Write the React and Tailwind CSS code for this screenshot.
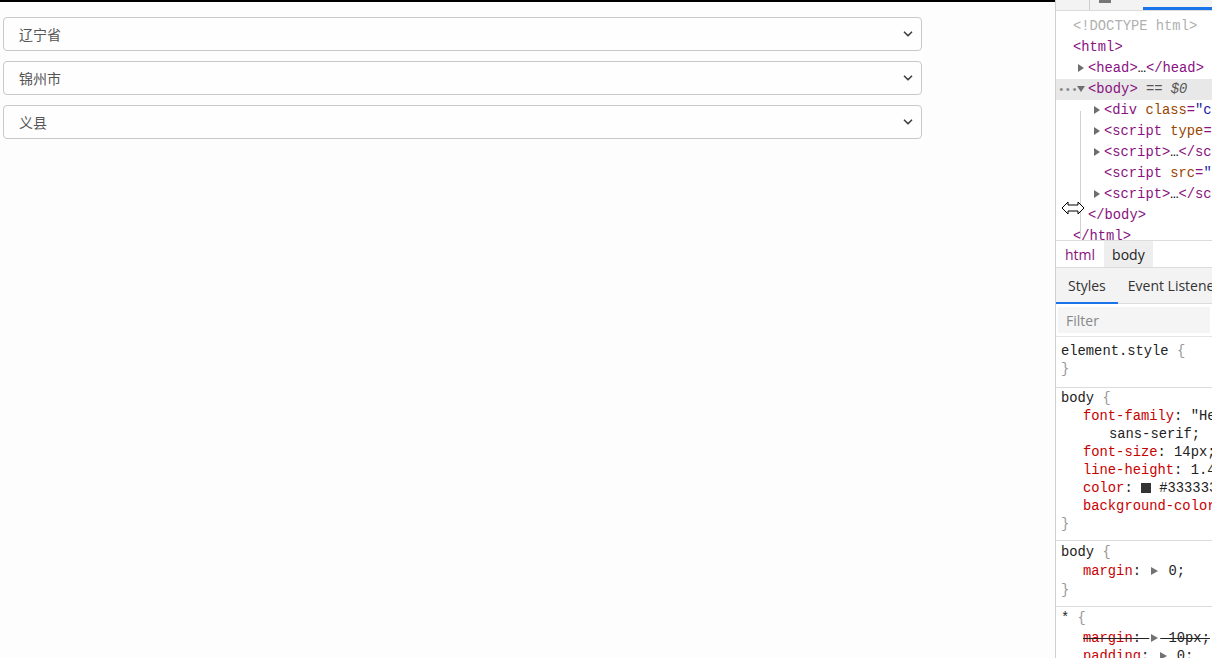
import { ChevronDown } from "lucide-react";

const selects = ["辽宁省", "锦州市", "义县"];

const mono = "font-['Consolas','Liberation_Mono',monospace] text-[13.8px]";

function Tag({ children }) {
  return <span className="text-[#881280]">{children}</span>;
}

function Tri({ open }) {
  return (
    <span className="inline-block w-[11px]">
      <svg width="8" height="8" viewBox="0 0 8 8" className="inline-block align-[0px]">
        {open ? (
          <path d="M0 1 L8 1 L4 7 Z" fill="#6e6e6e" />
        ) : (
          <path d="M1 0 L7 4 L1 8 Z" fill="#6e6e6e" />
        )}
      </svg>
    </span>
  );
}

function Arrow() {
  return (
    <svg width="7" height="8" viewBox="0 0 7 8" className="mx-[2px] inline-block align-[0px]">
      <path d="M0 0 L7 4 L0 8 Z" fill="#727272" />
    </svg>
  );
}

function Prop({ name, value, strike, h = "h-[18px] leading-[18px]" }) {
  return (
    <div className={`${h} pl-[22px] ${strike ? "line-through" : ""}`}>
      <span className="text-[#c80000]">{name}</span>
      <span className="text-[#222]">: {value}</span>
    </div>
  );
}

export default function App() {
  return (
    <div className="flex h-[658px] w-[1212px] overflow-hidden bg-[#fdfdfd] font-['Liberation_Sans','Noto_Sans_CJK_SC',sans-serif]">
      {/* page */}
      <div className="w-[1055px] shrink-0 border-t-2 border-black">
        <div className="flex flex-col gap-[10px] pt-[15px] pl-[3px]">
          {selects.map((s) => (
            <div
              key={s}
              className="relative flex h-[34px] w-[919px] items-center rounded-[4px] border border-[#c8c8c8] bg-[#fefefe] pl-[15px] text-[14px] text-[#555]"
            >
              <span className="font-['Noto_Sans_CJK_SC',sans-serif]">{s}</span>
              <ChevronDown
                size={14}
                strokeWidth={3}
                className="absolute right-[6px] top-[9px] text-[#444]"
              />
            </div>
          ))}
        </div>
      </div>

      {/* devtools */}
      <div className="relative w-[157px] shrink-0 overflow-hidden whitespace-nowrap border-l border-[#cfcfcf] bg-white">
        <div className="relative h-[11px] border-b border-[#dcdcdc] bg-[#f3f3f3]">
          <div className="absolute left-[43px] top-0 h-[3px] w-[12px] bg-[#777]" />
          <div className="absolute left-[33px] top-0 h-[10px] w-px bg-[#ccc]" />
          <div className="absolute left-[87px] top-[7px] h-[3px] w-[70px] bg-[#1a73e8]" />
        </div>

        {/* elements tree */}
        <div className={`${mono} relative h-[229px] pt-[5px]`}>
          <div className="absolute left-[24px] top-[100px] h-[128px] w-px bg-[#d0d0d0]" />
          <div className="h-[21px] leading-[21px] pl-[17px] text-[#b0b0b0]">&lt;!DOCTYPE html&gt;</div>
          <div className="h-[21px] leading-[21px] pl-[17px]"><Tag>&lt;html&gt;</Tag></div>
          <div className="h-[21px] leading-[21px] pl-[21px]">
            <Tri />
            <Tag>&lt;head&gt;</Tag>…<Tag>&lt;/head&gt;</Tag>
          </div>
          <div className="h-[21px] leading-[21px] bg-[#e8e8e8] pl-[2px]">
            <span className="inline-block w-[19px] text-[#888] text-[11px]">•••</span>
            <Tri open />
            <Tag>&lt;body&gt;</Tag>
            <span className="text-[#555]"> == </span>
            <span className="italic text-[#555]">$0</span>
          </div>
          <div className="h-[21px] leading-[21px] pl-[37px]">
            <Tri />
            <Tag>&lt;div </Tag>
            <span className="text-[#994500]">class</span>
            <Tag>=</Tag>
            <span className="text-[#1a1aa6]">"container"</span>
          </div>
          <div className="h-[21px] leading-[21px] pl-[37px]">
            <Tri />
            <Tag>&lt;script </Tag>
            <span className="text-[#994500]">type</span>
            <Tag>=</Tag>
            <span className="text-[#1a1aa6]">"text/javascript"</span>
          </div>
          <div className="h-[21px] leading-[21px] pl-[37px]">
            <Tri />
            <Tag>&lt;script&gt;</Tag>…<Tag>&lt;/script&gt;</Tag>
          </div>
          <div className="h-[21px] leading-[21px] pl-[48px]">
            <Tag>&lt;script </Tag>
            <span className="text-[#994500]">src</span>
            <Tag>=</Tag>
            <span className="text-[#1a1aa6]">"js/city.js"</span>
          </div>
          <div className="h-[21px] leading-[21px] pl-[37px]">
            <Tri />
            <Tag>&lt;script&gt;</Tag>…<Tag>&lt;/script&gt;</Tag>
          </div>
          <div className="h-[21px] leading-[21px] pl-[32px]"><Tag>&lt;/body&gt;</Tag></div>
          <div className="h-[21px] leading-[21px] pl-[17px]"><Tag>&lt;/html&gt;</Tag></div>
          {/* resize cursor */}
          <svg
            className="absolute left-[5px] top-[190px]"
            width="24"
            height="14"
            viewBox="0 0 24 14"
          >
            <path
              d="M1 7 L7 1 L7 4 L17 4 L17 1 L23 7 L17 13 L17 10 L7 10 L7 13 Z"
              fill="white"
              stroke="black"
              strokeWidth="1"
            />
          </svg>
        </div>

        {/* breadcrumbs */}
        <div className="flex h-[28px] items-center border-y border-[#dcdcdc] text-[14px] font-['Open_Sans',sans-serif]">
          <span className="px-[9px] text-[#881280]">html</span>
          <span className="flex h-full items-center bg-[#eeeeee] px-[8px] text-[#222]">body</span>
        </div>

        {/* tabs */}
        <div className="flex h-[36px] items-center border-b border-[#dcdcdc] bg-[#f3f3f3] text-[14px] font-['Open_Sans',sans-serif] text-[#333]">
          <div className="relative flex h-full items-center px-[12px]">
            Styles
            <div className="absolute bottom-[-1px] left-0 h-[2px] w-full bg-[#1a73e8]" />
          </div>
          <div className="px-[10px]">Event Listeners</div>
        </div>

        {/* filter */}
        <div className="border-b border-[#e4e4e4] px-[2px] py-[3px]">
          <div className="flex h-[26px] items-center bg-[#f5f5f5] pl-[8px] text-[14px] font-['Open_Sans',sans-serif] text-[#888]">
            Filter
          </div>
        </div>

        {/* styles */}
        <div className={`${mono} text-[#222]`}>
          <div className="border-b border-[#dcdcdc] pl-[5px] pt-[6px] pb-[8px]">
            <div className="h-[18px] leading-[18px]">element.style <span className="text-[#999]">{"{"}</span></div>
            <div className="h-[18px] leading-[18px] text-[#999]">{"}"}</div>
          </div>
          <div className="border-b border-[#dcdcdc] pl-[5px] pt-[2px] pb-[6px]">
            <div className="h-[18px] leading-[18px]">body <span className="text-[#999]">{"{"}</span></div>
            <Prop name="font-family" value={'"Helvetica Neue", Helvetica, Arial,'} />
            <div className="h-[18px] leading-[18px] pl-[48px]">sans-serif;</div>
            <Prop name="font-size" value="14px;" />
            <Prop name="line-height" value="1.42857143;" />
            <div className="h-[18px] leading-[18px] pl-[22px]">
              <span className="text-[#c80000]">color</span>:{" "}
              <span className="inline-block h-[10px] w-[10px] bg-[#333] align-[-1px]" /> #333333;
            </div>
            <Prop name="background-color" value="#fff;" />
            <div className="h-[18px] leading-[18px] text-[#999]">{"}"}</div>
          </div>
          <div className="border-b border-[#dcdcdc] pl-[5px] pt-[2px] pb-[6px]">
            <div className="h-[19px] leading-[19px]">body <span className="text-[#999]">{"{"}</span></div>
            <Prop h="h-[20px] leading-[20px]" name="margin" value={<><Arrow /> 0;</>} />
            <div className="h-[18px] leading-[18px] text-[#999]">{"}"}</div>
          </div>
          <div className="pl-[5px] pt-[2px]">
            <div className="h-[20px] leading-[20px]">* <span className="text-[#999]">{"{"}</span></div>
            <Prop h="h-[19px] leading-[19px]" strike name="margin" value={<><Arrow /> 10px;</>} />
            <Prop h="h-[18px] leading-[18px]" name="padding" value={<><Arrow /> 0;</>} />
          </div>
        </div>
      </div>
    </div>
  );
}
